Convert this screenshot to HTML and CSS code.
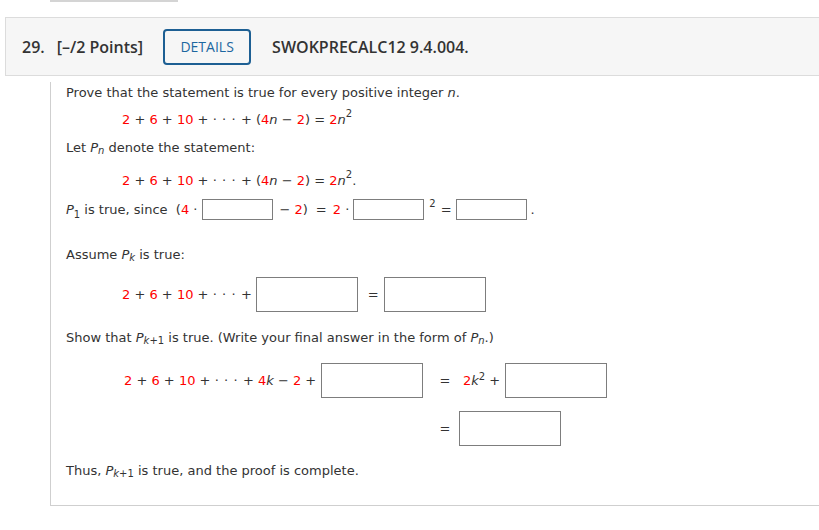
FILE: index.html
```html
<!DOCTYPE html>
<html>
<head>
<meta charset="utf-8">
<link rel="stylesheet" href="styles.css">
</head>
<body>
<div class="topbar"></div>
<div class="qhead">
  <span class="qnum">29.</span>
  <span class="qpts">[–/2 Points]</span>
  <span class="details">DETAILS</span>
  <span class="qid">SWOKPRECALC12 9.4.004.</span>
</div>
<div class="qbody">
  <div class="row r-prove">Prove that the statement is true for every positive integer&nbsp;<i>n</i>.</div>
  <div class="row eq r-eq1"><span class="red">2</span>&nbsp;+&nbsp;<span class="red">6</span>&nbsp;+&nbsp;<span class="red">10</span>&nbsp;+&nbsp;<span class="dots">···</span>+&nbsp;(<span class="red">4</span><i>n</i>&nbsp;−&nbsp;<span class="red">2</span>)&nbsp;=&nbsp;<span class="red">2</span><i>n</i><sup>2</sup></div>
  <div class="row r-let">Let&nbsp;<i>P</i><sub><i>n</i></sub>&nbsp;denote the statement:</div>
  <div class="row eq r-eq2"><span class="red">2</span>&nbsp;+&nbsp;<span class="red">6</span>&nbsp;+&nbsp;<span class="red">10</span>&nbsp;+&nbsp;<span class="dots">···</span>+&nbsp;(<span class="red">4</span><i>n</i>&nbsp;−&nbsp;<span class="red">2</span>)&nbsp;=&nbsp;<span class="red">2</span><i>n</i><sup>2</sup>.</div>
  <div class="row r-p1"><span><i>P</i><sub>1</sub>&nbsp;is true, since&nbsp;&nbsp;(<span class="red">4</span>&nbsp;·</span><span class="box small b1"></span><span>−&nbsp;<span class="red">2</span>)<span class="eqm">=</span><span class="red two">2</span>&nbsp;·</span><span class="box small b2"></span><span class="sq">2</span><span class="eqs">=</span><span class="box small b3"></span><span class="dot">.</span></div>
  <div class="row r-assume">Assume&nbsp;<i>P</i><sub><i>k</i></sub>&nbsp;is true:</div>
  <div class="row eq r-eq3"><span><span class="red">2</span>&nbsp;+&nbsp;<span class="red">6</span>&nbsp;+&nbsp;<span class="red">10</span>&nbsp;+&nbsp;<span class="dots">···</span>+</span><span class="box big b4"></span><span class="eq3eq">=</span><span class="box big"></span></div>
  <div class="row r-show">Show that&nbsp;<i>P</i><sub><i>k</i>+1</sub>&nbsp;is true. (Write your final answer in the form of&nbsp;<i>P</i><sub><i>n</i></sub>.)</div>
  <div class="grid r-eq4">
    <div class="lhs"><span><span class="red">2</span>&nbsp;+&nbsp;<span class="red">6</span>&nbsp;+&nbsp;<span class="red">10</span>&nbsp;+&nbsp;<span class="dots">···</span>+&nbsp;<span class="red">4</span><i>k</i>&nbsp;−&nbsp;<span class="red">2</span>&nbsp;+</span><span class="box big b5"></span></div>
    <div class="eqc">=</div>
    <div class="rhs"><span class="rhs1"><span class="red">2</span><i>k</i><sup>2</sup>&nbsp;+</span><span class="box big b6"></span></div>
    <div class="lhs"></div>
    <div class="eqc">=</div>
    <div class="rhs"><span class="box big"></span></div>
  </div>
  <div class="row r-thus">Thus,&nbsp;<i>P</i><sub><i>k</i>+1</sub>&nbsp;is true, and the proof is complete.</div>
</div>
</body>
</html>
```
FILE: styles.css
```css
body {
  margin: 0;
  background: #fff;
  font-family: "DejaVu Sans", Verdana, sans-serif;
  font-size: 13px;
  color: #333;
}
.topbar {
  width: 128px;
  height: 2px;
  margin-left: 50px;
  background: #d4d4d4;
}
.qhead {
  margin: 15px 0 0 5px;
  height: 57px;
  border: 1px solid #dcdcdc;
  border-right: none;
  background: #f6f6f6;
  display: flex;
  align-items: center;
  font-family: "Open Sans", sans-serif;
  font-weight: 600;
  font-size: 16px;
  color: #333;
}
.qnum { margin-left: 16px; }
.qpts { margin-left: 12px; }
.details {
  margin-left: 20px;
  width: 84px;
  height: 32px;
  border: 2px solid #1d5f93;
  border-radius: 4px;
  display: flex;
  align-items: center;
  justify-content: center;
  color: #1d67a0;
  font-weight: 400;
  font-size: 14px;
  background: transparent;
}
.qid { margin-left: 21px; }

.qbody {
  margin-left: 50px;
  border-left: 1px solid #cfcfcf;
  border-bottom: 1px solid #cfcfcf;
  padding: 0 0 25px 15px;
}
.row {
  display: flex;
  align-items: center;
  white-space: nowrap;
  height: 20px;
}
.eq { padding-left: 56px; }
i { font-style: italic; }
.red { color: #f00; }
.dots { letter-spacing: 5.3px; }
sub, sup { font-size: 10px; line-height: 0; position: relative; vertical-align: baseline; }
sub { top: 4px; }
sup { top: -5px; }
.box {
  display: inline-block;
  border: 1px solid #7d7d7d;
  background: #fff;
  box-sizing: border-box;
  flex: none;
}
.box.small { width: 71px; height: 21px; }
.box.big { width: 102px; height: 35px; }

.r-prove { margin-top: 6px; }
.r-eq1 { margin-top: 7px; }
.r-let { margin-top: 8px; }
.r-eq2 { margin-top: 13px; }
.r-p1 { margin-top: 8px; height: 22px; }
.b1 { margin-left: 5px; margin-right: 6px; }
.eqm { margin-left: 8px; }
.two { margin-left: 6px; }
.b2 { margin-left: 4px; margin-right: 5px; }
.sq { font-size: 10px; line-height: 10px; align-self: flex-start; margin-top: 1px; }
.eqs { margin: 0 4px 0 5px; }
.dot { margin-left: 4px; }
.r-assume { margin-top: 24px; }
.r-eq3 { margin-top: 13px; height: 35px; }
.b4 { margin-left: 4px; }
.eq3eq { margin: 0 5px 0 10px; }
.r-show { margin-top: 15px; }
.grid {
  display: grid;
  grid-template-columns: 307px 28px auto;
  row-gap: 13px;
  margin-top: 16px;
  padding-left: 58px;
}
.grid > div { display: flex; align-items: center; height: 35px; white-space: nowrap; }
.eqc { justify-content: center; }
.b5 { margin-left: 5px; }
.rhs1 { padding-left: 4px; }
.b6 { margin-left: 5px; }
.r-thus { margin-top: 14px; }
```
